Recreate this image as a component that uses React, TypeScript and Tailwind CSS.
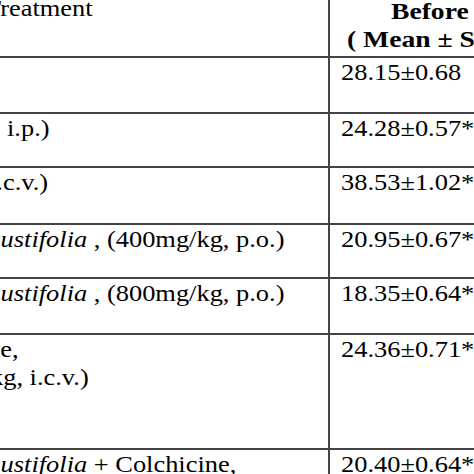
import React from "react";

const S = ({ children, className = "" }: { children: React.ReactNode; className?: string }) => (
  <span className={`inline-block origin-left scale-x-[1.148] whitespace-nowrap ${className}`}>{children}</span>
);

type Row = { h: string; left: React.ReactNode; right: string };

const rows: Row[] = [
  { h: "h-[56px]", left: null, right: "28.15±0.68" },
  { h: "h-[54px]", left: <S className="ml-[7px]">i.p.)</S>, right: "24.28±0.57*" },
  { h: "h-[57px]", left: <S className="ml-[-11px]">i.c.v.)</S>, right: "38.53±1.02*" },
  {
    h: "h-[54px]",
    left: (
      <S className="ml-[-39px]">
        <i>angustifolia</i> , (400mg/kg, p.o.)
      </S>
    ),
    right: "20.95±0.67*",
  },
  {
    h: "h-[56px]",
    left: (
      <S className="ml-[-39px]">
        <i>angustifolia</i> , (800mg/kg, p.o.)
      </S>
    ),
    right: "18.35±0.64*",
  },
  {
    h: "h-[115px]",
    left: (
      <div className="flex flex-col">
        <S className="ml-[-13px]">ne,</S>
        <S className="ml-[-10px]">kg, i.c.v.)</S>
      </div>
    ),
    right: "24.36±0.71*",
  },
  {
    h: "h-[60px]",
    left: (
      <S className="ml-[-39px]">
        <i>angustifolia</i> + Colchicine,
      </S>
    ),
    right: "20.40±0.64*",
  },
];

export default function App() {
  return (
    <div className="w-[474px] h-[474px] overflow-hidden bg-white text-black font-['Liberation_Serif',serif] text-[23px] leading-[28px]">
      <div className="w-[700px]">
        <div className="grid grid-cols-[328px_204px_1fr] h-[56px]">
          <div className="overflow-hidden">
            <div className="mt-[-5px]">
              <S className="ml-[-15px]">Treatment</S>
            </div>
          </div>
          <div className="border-l-2 border-[#444] font-bold">
            <div className="mt-[-2px] flex flex-col items-start">
              <span className="inline-block origin-left scale-x-[1.2] whitespace-nowrap ml-[61px]">Before</span>
              <span className="inline-block origin-left scale-x-[1.2] whitespace-nowrap ml-[17px]">( Mean ± SEM)</span>
            </div>
          </div>
          <div className="border-l-2 border-[#444]" />
        </div>
        {rows.map((r, i) => (
          <div key={i} className={`grid grid-cols-[328px_204px_1fr] border-t-2 border-[#444] ${r.h}`}>
            <div className="overflow-hidden pt-[1px]">{r.left}</div>
            <div className="border-l-2 border-[#444] pl-[11px] pt-[1px]">
              <S>{r.right}</S>
            </div>
            <div className="border-l-2 border-[#444]" />
          </div>
        ))}
      </div>
    </div>
  );
}
